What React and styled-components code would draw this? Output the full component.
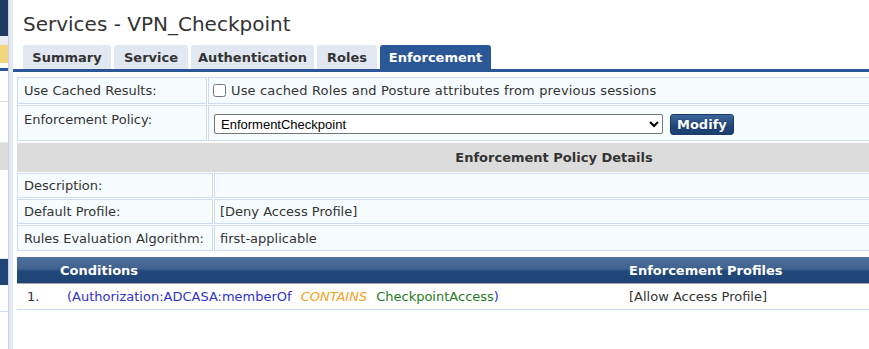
import React from "react";
import styled, { createGlobalStyle } from "styled-components";

const GlobalStyle = createGlobalStyle`
  html, body {
    margin: 0;
    padding: 0;
    background: #fff;
    overflow: hidden;
  }
  body {
    font-family: "DejaVu Sans", Verdana, sans-serif;
    font-size: 13px;
    color: #333;
  }
`;

const Page = styled.div`
  display: flex;
  height: 349px;
  width: 100%;
`;

const Sidebar = styled.aside`
  width: 8px;
  flex: none;
  display: flex;
  flex-direction: column;
  background: #fff;
`;

const Strip = styled.div`
  height: ${(p) => p.$h}px;
  background: ${(p) => p.$bg || "transparent"};
  border-bottom: ${(p) => (p.$line ? `1px solid ${p.$line}` : "none")};
  flex: none;
`;

const Splitter = styled.div`
  width: 4px;
  flex: none;
  background: #e3e9f1;
  border-left: 1px solid #c9d1dc;
`;

const Main = styled.main`
  flex: 1;
  min-width: 0;
  overflow: hidden;
`;

const Title = styled.h1`
  margin: 12px 0 0 10px;
  font-size: 20px;
  line-height: 24px;
  font-weight: normal;
  color: #333;
  white-space: nowrap;
`;

const TabBar = styled.nav`
  display: flex;
  gap: 3px;
  margin-top: 9px;
  padding-left: 10px;
  border-bottom: 3px solid #2b5797;
`;

const Tab = styled.div`
  width: ${(p) => p.$w}px;
  height: 24px;
  line-height: 25px;
  text-align: center;
  border-radius: 3px 3px 0 0;
  font-weight: bold;
  font-size: 13px;
  white-space: nowrap;
  background: ${(p) => (p.$active ? "#2b5797" : "#e1e8f2")};
  color: ${(p) => (p.$active ? "#fff" : "#333")};
`;

const Table = styled.table`
  width: 1076px;
  margin: ${(p) => p.$mt || 0}px 0 0 3px;
  border-collapse: separate;
  border-spacing: 1px;
  table-layout: fixed;
`;

const Label = styled.td`
  box-sizing: border-box;
  height: ${(p) => p.$h || 25}px;
  padding: ${(p) => (p.$top ? "6px" : "0")} 6px 0;
  vertical-align: ${(p) => (p.$top ? "top" : "middle")};
  background: #f7fcff;
  border: 1px solid #cddcf2;
  white-space: nowrap;
`;

const Value = styled.td`
  box-sizing: border-box;
  height: ${(p) => p.$h || 25}px;
  padding: 0 5px;
  background: #f7fcff;
  border: 1px solid #cddcf2;
  white-space: nowrap;
`;

const SectionHead = styled.th`
  height: 27px;
  background: #dcdcdc;
  font-weight: bold;
  text-align: center;
  color: #333;
`;

const CheckLabel = styled.label`
  display: flex;
  align-items: center;
  gap: 5px;
  letter-spacing: 0.15px;
`;

const Check = styled.input`
  margin: 0 0 0 -1px;
  width: 13px;
  height: 13px;
`;

const Controls = styled.div`
  display: flex;
  align-items: center;
  gap: 7px;
  margin-top: 2px;
`;

const Select = styled.select`
  width: 449px;
  height: 20px;
  font-family: "Liberation Sans", Arial, sans-serif;
  font-size: 13px;
  color: #000;
  background: #fff;
  border: 1px solid #767676;
  border-radius: 2px;
  padding: 0 2px;
`;

const Button = styled.button`
  height: 21px;
  padding: 0 6px;
  font-family: "DejaVu Sans", Verdana, sans-serif;
  font-weight: bold;
  font-size: 13px;
  color: #fff;
  text-shadow: 0 0 1px #0b2447;
  background: linear-gradient(#3d669c, #1f4579 60%, #1c3f70);
  border: 1px solid #183a68;
  border-radius: 3px;
`;

const GridTable = styled.table`
  width: 1076px;
  margin: 5px 0 0 4px;
  border-collapse: collapse;
  table-layout: fixed;
`;

const GridHead = styled.th`
  height: 26px;
  padding: 0 0 0 ${(p) => p.$pad || 0}px;
  text-align: left;
  font-weight: bold;
  color: #fff;
  background: linear-gradient(#50709c 0%, #40628f 45%, #214778 55%, #1f4478 100%);
  border-bottom: 1px solid #a7a7a7;
  white-space: nowrap;
`;

const GridCell = styled.td`
  height: 25px;
  padding: 0 0 0 ${(p) => p.$pad || 0}px;
  border-bottom: 1px solid #cddcf2;
  white-space: nowrap;
`;

const Attr = styled.span`
  color: #3131c6;
`;

const Op = styled.span`
  color: #f4a21f;
  font-style: italic;
  margin: 0 9px;
`;

const Val = styled.span`
  color: #1d7d1d;
`;

const tabs = [
  { name: "Summary", w: 88 },
  { name: "Service", w: 74 },
  { name: "Authentication", w: 123 },
  { name: "Roles", w: 60 },
  { name: "Enforcement", w: 111, active: true },
];

const sideStrips = [
  { h: 36, bg: "#1f3b63" },
  { h: 9, bg: "#e9edf2" },
  { h: 18, bg: "#f3d57d" },
  { h: 5, bg: "#fff" },
  { h: 3, bg: "#2b5797" },
  { h: 30, bg: "#fff", line: "#d8dde4" },
  { h: 40, bg: "#fff", line: "#e2e6eb" },
  { h: 27, bg: "#dcdcdc" },
  { h: 88, bg: "#fff", line: "#e2e6eb" },
  { h: 26, bg: "#1f4478" },
  { h: 26, bg: "#fff", line: "#cddcf2" },
];

export default function App() {
  return (
    <>
      <GlobalStyle />
      <Page>
        <Sidebar>
          {sideStrips.map((s, i) => (
            <Strip key={i} $h={s.h} $bg={s.bg} $line={s.line} />
          ))}
        </Sidebar>
        <Splitter />
        <Main>
          <Title>Services - VPN_Checkpoint</Title>
          <TabBar>
            {tabs.map((t) => (
              <Tab key={t.name} $w={t.w} $active={t.active}>
                {t.name}
              </Tab>
            ))}
          </TabBar>

          <Table $mt={4}>
            <colgroup>
              <col style={{ width: 190 }} />
              <col />
            </colgroup>
            <tbody>
              <tr>
                <Label $h={27}>Use Cached Results:</Label>
                <Value $h={27}>
                  <CheckLabel>
                    <Check type="checkbox" />
                    Use cached Roles and Posture attributes from previous sessions
                  </CheckLabel>
                </Value>
              </tr>
              <tr>
                <Label $h={36} $top>Enforcement Policy:</Label>
                <Value $h={36}>
                  <Controls>
                    <Select defaultValue="EnformentCheckpoint">
                      <option>EnformentCheckpoint</option>
                    </Select>
                    <Button type="button">Modify</Button>
                  </Controls>
                </Value>
              </tr>
            </tbody>
          </Table>

          <Table>
            <colgroup>
              <col style={{ width: 196 }} />
              <col />
            </colgroup>
            <thead>
              <tr>
                <SectionHead colSpan={2}>Enforcement Policy Details</SectionHead>
              </tr>
            </thead>
            <tbody>
              <tr>
                <Label>Description:</Label>
                <Value />
              </tr>
              <tr>
                <Label>Default Profile:</Label>
                <Value>[Deny Access Profile]</Value>
              </tr>
              <tr>
                <Label $h={26}>Rules Evaluation Algorithm:</Label>
                <Value $h={26}>first-applicable</Value>
              </tr>
            </tbody>
          </Table>

          <GridTable>
            <colgroup>
              <col style={{ width: 40 }} />
              <col style={{ width: 564 }} />
              <col />
            </colgroup>
            <thead>
              <tr>
                <GridHead />
                <GridHead $pad={3}>Conditions</GridHead>
                <GridHead $pad={8}>Enforcement Profiles</GridHead>
              </tr>
            </thead>
            <tbody>
              <tr>
                <GridCell $pad={10}>1.</GridCell>
                <GridCell $pad={10}>
                  <Attr>(Authorization:ADCASA:memberOf</Attr>
                  <Op>CONTAINS</Op>
                  <Val>CheckpointAccess</Val>
                  <Attr>)</Attr>
                </GridCell>
                <GridCell $pad={8}>[Allow Access Profile]</GridCell>
              </tr>
            </tbody>
          </GridTable>
        </Main>
      </Page>
    </>
  );
}
